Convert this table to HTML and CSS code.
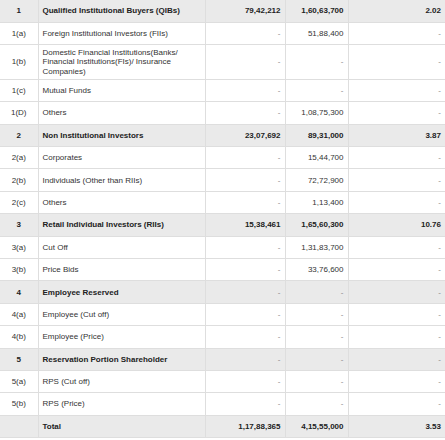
FILE: index.html
```html
<!DOCTYPE html>
<html lang="en">
<head>
    <meta charset="UTF-8">
    <meta name="viewport" content="width=device-width, initial-scale=1.0">
    <title>Subscription Status</title>
    <link rel="stylesheet" href="styles.css">
</head>
<body>
    <table class="sub-table">
        <colgroup>
            <col class="c-no">
            <col class="c-cat">
            <col class="c-off">
            <col class="c-bid">
            <col class="c-times">
        </colgroup>
        <tbody>
            <tr class="group-row">
                <td class="no">1</td>
                <td>Qualified Institutional Buyers (QIBs)</td>
                <td class="num">79,42,212</td>
                <td class="num">1,60,63,700</td>
                <td class="num">2.02</td>
            </tr>
            <tr>
                <td class="no">1(a)</td>
                <td>Foreign Institutional Investors (FIIs)</td>
                <td class="num dash">-</td>
                <td class="num">51,88,400</td>
                <td class="num dash">-</td>
            </tr>
            <tr>
                <td class="no">1(b)</td>
                <td>Domestic Financial Institutions(Banks/ Financial Institutions(FIs)/ Insurance Companies)</td>
                <td class="num dash">-</td>
                <td class="num dash">-</td>
                <td class="num dash">-</td>
            </tr>
            <tr>
                <td class="no">1(c)</td>
                <td>Mutual Funds</td>
                <td class="num dash">-</td>
                <td class="num dash">-</td>
                <td class="num dash">-</td>
            </tr>
            <tr>
                <td class="no">1(D)</td>
                <td>Others</td>
                <td class="num dash">-</td>
                <td class="num">1,08,75,300</td>
                <td class="num dash">-</td>
            </tr>
            <tr class="group-row">
                <td class="no">2</td>
                <td>Non Institutional Investors</td>
                <td class="num">23,07,692</td>
                <td class="num">89,31,000</td>
                <td class="num">3.87</td>
            </tr>
            <tr>
                <td class="no">2(a)</td>
                <td>Corporates</td>
                <td class="num dash">-</td>
                <td class="num">15,44,700</td>
                <td class="num dash">-</td>
            </tr>
            <tr>
                <td class="no">2(b)</td>
                <td>Individuals (Other than RIIs)</td>
                <td class="num dash">-</td>
                <td class="num">72,72,900</td>
                <td class="num dash">-</td>
            </tr>
            <tr>
                <td class="no">2(c)</td>
                <td>Others</td>
                <td class="num dash">-</td>
                <td class="num">1,13,400</td>
                <td class="num dash">-</td>
            </tr>
            <tr class="group-row">
                <td class="no">3</td>
                <td>Retail Individual Investors (RIIs)</td>
                <td class="num">15,38,461</td>
                <td class="num">1,65,60,300</td>
                <td class="num">10.76</td>
            </tr>
            <tr>
                <td class="no">3(a)</td>
                <td>Cut Off</td>
                <td class="num dash">-</td>
                <td class="num">1,31,83,700</td>
                <td class="num dash">-</td>
            </tr>
            <tr>
                <td class="no">3(b)</td>
                <td>Price Bids</td>
                <td class="num dash">-</td>
                <td class="num">33,76,600</td>
                <td class="num dash">-</td>
            </tr>
            <tr class="group-row">
                <td class="no">4</td>
                <td>Employee Reserved</td>
                <td class="num dash">-</td>
                <td class="num dash">-</td>
                <td class="num dash">-</td>
            </tr>
            <tr>
                <td class="no">4(a)</td>
                <td>Employee (Cut off)</td>
                <td class="num dash">-</td>
                <td class="num dash">-</td>
                <td class="num dash">-</td>
            </tr>
            <tr>
                <td class="no">4(b)</td>
                <td>Employee (Price)</td>
                <td class="num dash">-</td>
                <td class="num dash">-</td>
                <td class="num dash">-</td>
            </tr>
            <tr class="group-row">
                <td class="no">5</td>
                <td>Reservation Portion Shareholder</td>
                <td class="num dash">-</td>
                <td class="num dash">-</td>
                <td class="num dash">-</td>
            </tr>
            <tr>
                <td class="no">5(a)</td>
                <td>RPS (Cut off)</td>
                <td class="num dash">-</td>
                <td class="num dash">-</td>
                <td class="num dash">-</td>
            </tr>
            <tr>
                <td class="no">5(b)</td>
                <td>RPS (Price)</td>
                <td class="num dash">-</td>
                <td class="num dash">-</td>
                <td class="num dash">-</td>
            </tr>
            <tr class="group-row">
                <td class="no"></td>
                <td>Total</td>
                <td class="num">1,17,88,365</td>
                <td class="num">4,15,55,000</td>
                <td class="num">3.53</td>
            </tr>
        </tbody>
    </table>
</body>
</html>
```

FILE: styles.css
```css
body { margin: 0; background: #fff; font-family: "Liberation Sans", Arial, sans-serif; }
.sub-table { width: 445px; border-collapse: collapse; table-layout: fixed; font-size: 8px; color: #333; }
.c-no { width: 38px; }
.c-cat { width: 167px; }
.c-off { width: 80px; }
.c-bid { width: 63px; }
.c-times { width: 97px; }
.sub-table tr { height: 22.4px; }
.sub-table td { padding: 3px 4px; line-height: 9.2px; vertical-align: middle; border-bottom: 1px solid #dedede; border-right: 1px solid #dedede; }
.sub-table td:last-child { border-right: none; }
.no { text-align: center; }
.num { text-align: right; }
.dash { color: #888; }
.group-row td { background: #eaeaea; font-weight: bold; color: #222; }
.group-row td.dash { color: #888; font-weight: normal; }
```
